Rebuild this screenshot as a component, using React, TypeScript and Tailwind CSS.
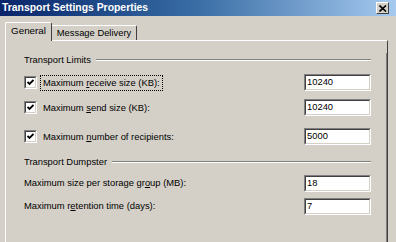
import type { ReactNode } from "react";

export default function App() {
  return (
    <div className="relative h-[242px] w-[396px] overflow-hidden bg-[#d4d0c8] font-['Liberation_Sans',Arial,sans-serif] text-[9.4px] text-black">
      <TitleBar />
      <div className="mt-[6px] flex items-end pl-[5px]">
        <div className="relative z-10 -mb-px flex h-[19px] w-[47px] items-center justify-center rounded-t-[2px] border-l border-t border-r border-l-white border-t-white border-r-[#404040] bg-[#d4d0c8] pb-[2px] text-[9.8px]">
          General
        </div>
        <div className="flex h-[15px] w-[85px] items-center justify-center rounded-tr-[2px] border-t border-r border-t-white border-r-[#404040] bg-[#d4d0c8]">
          Message Delivery
        </div>
      </div>
      <div className="ml-[5px] h-[220px] w-[383px] border-l border-t border-r border-l-white border-t-white border-r-[#404040]">
        <div className="h-full border-r border-r-[#808080] pl-[18px] pr-[15px]">
          <GroupHeader label="Transport Limits" className="mt-[12px]" />
          <CheckRow className="mt-[7px]" focused label={<>Maximum <u>r</u>eceive size (KB):</>} value="10240" />
          <CheckRow className="mt-[8px]" label={<>Maximum <u>s</u>end size (KB):</>} value="10240" />
          <CheckRow className="mt-[12px]" label={<>Maximum <u>n</u>umber of recipients:</>} value="5000" />
          <GroupHeader label="Transport Dumpster" className="mt-[10px]" />
          <FieldRow className="mt-[6px]" label={<>Maximum size per storage gr<u>o</u>up (MB):</>} value="18" />
          <FieldRow className="mt-[6px]" label={<>Maximum r<u>e</u>tention time (days):</>} value="7" />
        </div>
      </div>
    </div>
  );
}

function TitleBar() {
  return (
    <div className="flex h-[16px] items-center bg-gradient-to-r from-[#0a246a] via-[#3a6ea5] to-[#a6caf0] pl-[2px] pr-[7px]">
      <span className="text-[10.4px] font-bold text-white">Transport Settings Properties</span>
      <div className="ml-auto flex h-[12px] w-[13px] items-center justify-center border border-t-white border-l-white border-b-[#404040] border-r-[#404040] bg-[#d4d0c8]">
        <svg width="8" height="7" viewBox="0 0 8 7">
          <path d="M0.5 0.5 L7 6.5 M7 0.5 L0.5 6.5" stroke="#000" strokeWidth="1.6" />
        </svg>
      </div>
    </div>
  );
}

function GroupHeader({ label, className = "" }: { label: string; className?: string }) {
  return (
    <div className={`flex h-[14px] items-center ${className}`}>
      <span>{label}</span>
      <div className="ml-[5px] h-[2px] flex-1 border-t border-b border-t-[#808080] border-b-white" />
    </div>
  );
}

function CheckRow({
  label,
  value,
  focused = false,
  className = "",
}: {
  label: ReactNode;
  value: string;
  focused?: boolean;
  className?: string;
}) {
  return (
    <div className={`flex h-[17px] items-center ${className}`}>
      <Checkbox />
      <span
        className={`ml-[3px] px-[2px] py-[1px] leading-[12px] ${
          focused ? "border border-dotted border-black" : "border border-transparent"
        }`}
      >
        {label}
      </span>
      <TextBox value={value} />
    </div>
  );
}

function FieldRow({
  label,
  value,
  className = "",
}: {
  label: ReactNode;
  value: string;
  className?: string;
}) {
  return (
    <div className={`flex h-[17px] items-center ${className}`}>
      <span>{label}</span>
      <TextBox value={value} />
    </div>
  );
}

function Checkbox() {
  return (
    <div className="h-[13px] w-[13px] border border-t-[#808080] border-l-[#808080] border-b-white border-r-white">
      <div className="flex h-full w-full items-center justify-center border border-t-[#404040] border-l-[#404040] border-b-[#d4d0c8] border-r-[#d4d0c8] bg-white">
        <svg width="7" height="7" viewBox="0 0 7 7">
          <path d="M0.5 3 L2.5 5 L6.5 1" stroke="#000" strokeWidth="1.8" fill="none" />
        </svg>
      </div>
    </div>
  );
}

function TextBox({ value }: { value: string }) {
  return (
    <div className="ml-auto h-[17px] w-[67px] border border-t-[#808080] border-l-[#808080] border-b-white border-r-white">
      <div className="flex h-full w-full items-center border border-t-[#404040] border-l-[#404040] border-b-[#d4d0c8] border-r-[#d4d0c8] bg-white pl-[1px]">
        {value}
      </div>
    </div>
  );
}
